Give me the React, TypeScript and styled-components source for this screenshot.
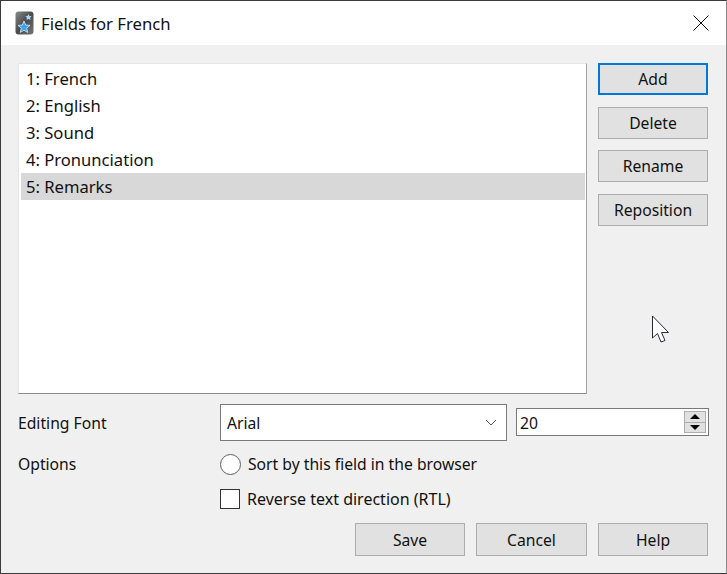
import React from "react";
import styled, { createGlobalStyle } from "styled-components";

const Global = createGlobalStyle`
  html, body { margin: 0; padding: 0; background: #f0f0f0; }
  * { box-sizing: border-box; }
`;

const Window = styled.div`
  position: relative;
  width: 727px;
  height: 574px;
  display: flex;
  flex-direction: column;
  background: #f0f0f0;
  border: 1px solid #3a3a3a;
  border-right-color: #8a8a8a;
  font-family: "Noto Sans", "Open Sans", sans-serif;
  font-size: 15.7px;
  color: #111;
  overflow: hidden;
`;

const TitleBar = styled.div`
  height: 44px;
  flex: none;
  background: #fff;
  display: flex;
  align-items: center;
  padding: 0 17px 0 14px;
  gap: 6px;
`;

const TitleText = styled.span`
  flex: 1;
  font-size: 16.7px;
`;

const Body = styled.div`
  flex: 1;
  display: flex;
  flex-direction: column;
  padding: 18px 17px 16px 17px;
`;

const TopRow = styled.div`
  display: flex;
  gap: 11px;
  height: 331px;
`;

const List = styled.div`
  width: 569px;
  background: #fff;
  border: 1px solid;
  border-color: #e6e6e6 #a0a0a0 #8c8c8c #e6e6e6;
  padding: 1px 1px 0 2px;
`;

const ListRow = styled.div<{ $selected?: boolean }>`
  height: 27px;
  line-height: 28px;
  padding-left: 5px;
  font-size: 16.6px;
  background: ${(p) => (p.$selected ? "#d8d8d8" : "transparent")};
`;

const ButtonColumn = styled.div`
  display: flex;
  flex-direction: column;
  gap: 11.67px;
`;

const Button = styled.button<{ $primary?: boolean; $wide?: boolean }>`
  width: ${(p) => (p.$wide ? "111px" : "110px")};
  height: 32px;
  padding: 0;
  background: #e1e1e1;
  border: ${(p) => (p.$primary ? "2px solid #0078d7" : "1px solid #adadad")};
  border-radius: 0;
  font: inherit;
  color: #111;
`;

const FormRow = styled.div`
  display: flex;
  align-items: center;
`;

const FontRow = styled(FormRow)`
  margin-top: 10px;
  height: 37px;
`;

const OptionsRow = styled(FormRow)`
  margin-top: 10px;
  height: 26px;
`;

const CheckRow = styled(FormRow)`
  margin-top: 12px;
  height: 20px;
  padding-left: 202px;
`;

const CheckLabel = styled.span`
  font-size: 16px;
`;

const Label = styled.span`
  width: 202px;
  flex: none;
`;

const Combo = styled.div`
  width: 287px;
  height: 37px;
  background: #fff;
  border: 1px solid #7a7a7a;
  display: flex;
  align-items: center;
  justify-content: space-between;
  padding: 0 9px 0 6px;
`;

const Spin = styled.div`
  align-self: flex-start;
  margin: 4px 0 0 9px;
  width: 193px;
  height: 28px;
  background: #fff;
  border: 1px solid #7a7a7a;
  display: flex;
  align-items: center;
  justify-content: space-between;
  padding: 0 2px 0 3px;
`;

const SpinValue = styled.span`
  padding-top: 2px;
`;

const SpinButtons = styled.div`
  width: 22px;
  height: 22px;
  display: flex;
  flex-direction: column;
`;

const SpinButton = styled.div`
  flex: 1;
  background: #e1e1e1;
  border: 1px solid #adadad;
  display: flex;
  align-items: center;
  justify-content: center;
  & + & { margin-top: -1px; }
`;

const Radio = styled.span`
  width: 21px;
  height: 21px;
  flex: none;
  border-radius: 50%;
  background: #fff;
  border: 1px solid #5f5f5f;
  margin-right: 7px;
`;

const Checkbox = styled.span`
  width: 20px;
  height: 20px;
  flex: none;
  background: #fff;
  border: 1px solid #333;
  margin-right: 7px;
`;

const Footer = styled.div`
  margin-top: 14px;
  display: flex;
  justify-content: flex-end;
  gap: 11px;
  padding-right: 1px;
`;

const FooterButton = styled(Button)`
  height: 33px;
`;

const Pointer = styled.svg`
  position: absolute;
  left: 650px;
  top: 314px;
`;

const AppIcon = () => (
  <svg width="20" height="24" viewBox="0 0 20 24">
    <defs>
      <linearGradient id="g" x1="0" y1="0" x2="1" y2="1">
        <stop offset="0" stopColor="#8a8a8a" />
        <stop offset="0.5" stopColor="#4a4a4a" />
        <stop offset="1" stopColor="#777" />
      </linearGradient>
    </defs>
    <rect x="0.5" y="0.5" width="18" height="23" rx="3" fill="url(#g)" />
    <path d="M12 11 L13.7 15 L18 15.4 L14.7 18.2 L15.7 22.4 L12 20.2 L8.3 22.4 L9.3 18.2 L6 15.4 L10.3 15 Z" transform="translate(-3 -1)" fill="#3ea2ee" stroke="#d5ecfb" strokeWidth="0.8" />
    <path d="M13.5 3 L14.5 5 L16.7 5.3 L15.1 6.8 L15.5 9 L13.5 8 L11.5 9 L11.9 6.8 L10.3 5.3 L12.5 5 Z" fill="#a9d6f5" />
  </svg>
);

const fields = ["1: French", "2: English", "3: Sound", "4: Pronunciation", "5: Remarks"];

export default function App() {
  return (
    <>
      <Global />
      <Window>
        <TitleBar>
          <AppIcon />
          <TitleText>Fields for French</TitleText>
          <svg width="16" height="16" viewBox="0 0 16 16">
            <path d="M0.5 0.5 L15.5 15.5 M15.5 0.5 L0.5 15.5" stroke="#111" strokeWidth="1" fill="none" />
          </svg>
        </TitleBar>
        <Body>
          <TopRow>
            <List>
              {fields.map((f, i) => (
                <ListRow key={f} $selected={i === 4}>{f}</ListRow>
              ))}
            </List>
            <ButtonColumn>
              <Button $primary>Add</Button>
              <Button>Delete</Button>
              <Button>Rename</Button>
              <Button>Reposition</Button>
            </ButtonColumn>
          </TopRow>
          <FontRow>
            <Label>Editing Font</Label>
            <Combo>
              <span>Arial</span>
              <svg width="12" height="7" viewBox="0 0 12 7">
                <path d="M1 1 L6 6 L11 1" stroke="#555" strokeWidth="1" fill="none" />
              </svg>
            </Combo>
            <Spin>
              <SpinValue>20</SpinValue>
              <SpinButtons>
                <SpinButton>
                  <svg width="10" height="5" viewBox="0 0 10 5"><path d="M5 0 L10 5 L0 5 Z" fill="#000" /></svg>
                </SpinButton>
                <SpinButton>
                  <svg width="10" height="5" viewBox="0 0 10 5"><path d="M0 0 L10 0 L5 5 Z" fill="#000" /></svg>
                </SpinButton>
              </SpinButtons>
            </Spin>
          </FontRow>
          <OptionsRow>
            <Label>Options</Label>
            <Radio />
            <span>Sort by this field in the browser</span>
          </OptionsRow>
          <CheckRow>
            <Checkbox />
            <CheckLabel>Reverse text direction (RTL)</CheckLabel>
          </CheckRow>
          <Footer>
            <FooterButton>Save</FooterButton>
            <FooterButton $wide>Cancel</FooterButton>
            <FooterButton>Help</FooterButton>
          </Footer>
        </Body>
        <Pointer width="20" height="30" viewBox="0 0 20 30">
          <path d="M1.5 1 L1.5 23 L6.5 18.5 L10 27 L14 25.5 L10.5 17.5 L17.5 17.5 Z" fill="#fff" stroke="#2a2a35" strokeWidth="1" />
        </Pointer>
      </Window>
    </>
  );
}
